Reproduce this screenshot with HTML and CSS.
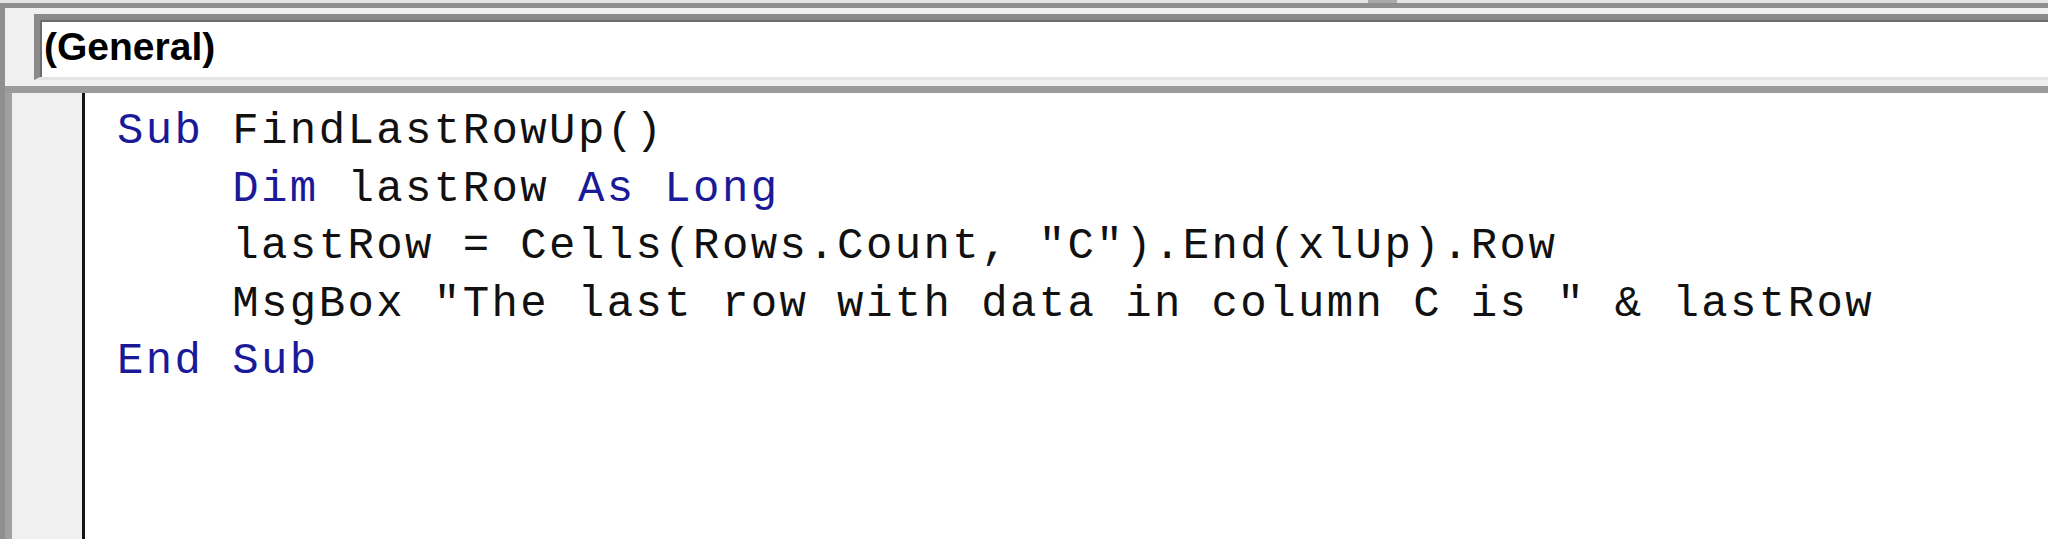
FILE: index.html
```html
<!DOCTYPE html>
<html>
<head>
<meta charset="utf-8">
<link rel="stylesheet" href="styles.css">
</head>
<body>
<div class="window">
  <div class="top-edge"><div class="grip"></div></div>
  <div class="frame">
    <div class="toolbar">
      <div class="combo"><span class="combo-text">(General)</span></div>
    </div>
    <div class="pane">
      <div class="gutter"></div>
      <pre class="code"><span class="kw">Sub</span> FindLastRowUp()
    <span class="kw">Dim</span> lastRow <span class="kw">As</span> <span class="kw">Long</span>
    lastRow = Cells(Rows.Count, "C").End(xlUp).Row
    MsgBox "The last row with data in column C is " &amp; lastRow
<span class="kw">End</span> <span class="kw">Sub</span></pre>
    </div>
  </div>
</div>
</body>
</html>
```

FILE: styles.css
```css
html, body {
  margin: 0;
  padding: 0;
  background: #f0f0f0;
}

.window {
  width: 2048px;
  height: 539px;
  overflow: hidden;
  display: flex;
  flex-direction: column;
}

.top-edge {
  height: 8px;
  flex: none;
  display: flex;
  background: linear-gradient(to bottom, #e4e4e4 0, #e4e4e4 3px, #8e8e8e 3px, #8e8e8e 8px);
}

.grip {
  margin-left: 1368px;
  width: 29px;
  height: 3px;
  background: #a9a9a9;
}

.frame {
  flex: 1;
  display: flex;
  flex-direction: column;
  border-left: 5px solid #8f8f8f;
  min-height: 0;
}

.toolbar {
  flex: none;
  padding: 6px 0 6px 29px;
  background: #f0f0f0;
}

.combo {
  height: 57px;
  background: #ffffff;
  border-top: 6px solid #8a8a8a;
  border-left: 6px solid #8a8a8a;
  border-bottom: 3px solid #e3e3e3;
  display: flex;
  align-items: center;
  padding-left: 4px;
  box-shadow: inset 2px 2px 0 #6c6c6c;
}

.combo-text {
  font-family: "Liberation Sans", Arial, sans-serif;
  font-weight: bold;
  font-size: 39px;
  color: #000;
  margin-top: -4px;
}

.pane {
  flex: 1;
  display: flex;
  min-height: 0;
  border-top: 7px solid #9a9a9a;
  box-shadow: inset 0 1px 0 #7d7d7d;
}

.gutter {
  flex: none;
  width: 70px;
  background: #f0f0f0;
  border-left: 7px solid #a0a0a0;
  border-right: 3px solid #141414;
  box-shadow: 1px 0 0 #7a7a7a;
}

.code {
  flex: 1;
  margin: 0;
  background: #ffffff;
  padding: 10px 0 0 32px;
  font-family: "Courier New", "Liberation Mono", monospace;
  font-size: 44px;
  letter-spacing: 2.4px;
  line-height: 57.5px;
  color: #111111;
}

.kw {
  color: #1a1a98;
}
```
